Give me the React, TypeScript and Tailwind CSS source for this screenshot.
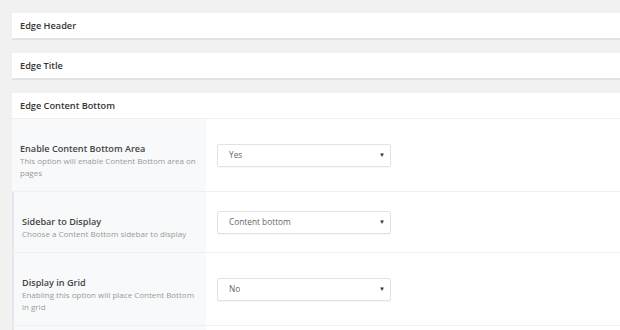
import React from "react";

const font = { fontFamily: '"Open Sans", "Noto Sans", sans-serif' };

function Panel({ title }: { title: string }) {
  return (
    <div className="ml-[12px] mr-[-10px] h-[26px] bg-white flex items-center pl-[8px] shadow-[0_1px_1px_rgba(0,0,0,0.06)] border-b border-[#e6e6e6]">
      <span className="text-[9.2px] font-semibold text-[#333]">{title}</span>
    </div>
  );
}

function Row({
  title,
  desc,
  value,
  height,
  leftBorder,
}: {
  title: string;
  desc: string[];
  value: string;
  height: string;
  leftBorder?: boolean;
}) {
  return (
    <div className={`flex border-b border-[#eef0f2] ${height}`}>
      <div
        className={`w-[194px] shrink-0 bg-[#f8f9fa] pl-[8px] pt-[23px] ${
          leftBorder ? "border-l-2 border-[#e3e8ee] pl-[6px]" : ""
        }`}
      >
        <div className="text-[9.1px] leading-[13px] font-semibold text-[#444]">{title}</div>
        {desc.map((d, i) => (
          <div key={i} className="text-[8px] leading-[12px] text-[#999]">
            {d}
          </div>
        ))}
      </div>
      <div className="flex-1 flex items-center pl-[11px]">
        <div className="w-[174px] h-[23px] border border-[#e2e2e2] rounded-[2px] flex items-center justify-between pl-[11px] pr-[5px] shadow-[0_1px_1px_rgba(0,0,0,0.03)]">
          <span className="text-[8.3px] text-[#666]">{value}</span>
          <span className="text-[6px] text-[#333]">▼</span>
        </div>
      </div>
    </div>
  );
}

export default function App() {
  return (
    <div className="w-[620px] h-[330px] overflow-hidden bg-[#f1f1f1] pt-[13px]" style={font}>
      <Panel title="Edge Header" />
      <div className="h-[14px]" />
      <Panel title="Edge Title" />
      <div className="h-[14px]" />
      <div className="ml-[12px] mr-[-10px] bg-white">
        <div className="h-[26px] flex items-center pl-[8px] border-b border-[#eef0f2]">
          <span className="text-[9.2px] font-semibold text-[#333]">Edge Content Bottom</span>
        </div>
        <Row
          title="Enable Content Bottom Area"
          desc={["This option will enable Content Bottom area on", "pages"]}
          value="Yes"
          height="h-[73px]"
        />
        <Row
          title="Sidebar to Display"
          desc={["Choose a Content Bottom sidebar to display"]}
          value="Content bottom"
          height="h-[61px]"
          leftBorder
        />
        <Row
          title="Display in Grid"
          desc={["Enabling this option will place Content Bottom", "in grid"]}
          value="No"
          height="h-[73px]"
          leftBorder
        />
        <div className="flex h-[20px]">
          <div className="w-[194px] bg-[#f8f9fa] border-l-2 border-[#e3e8ee]" />
        </div>
      </div>
    </div>
  );
}
